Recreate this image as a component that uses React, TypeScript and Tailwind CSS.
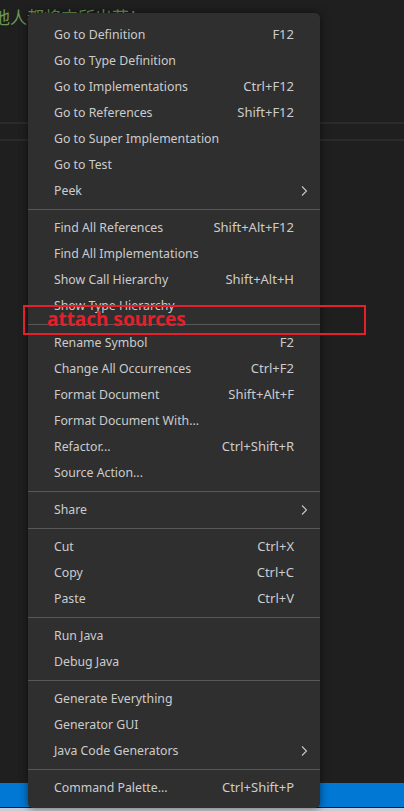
import React from 'react';

type Item = { label: string; keys?: string; sub?: boolean };

const GROUPS: Item[][] = [
  [
    { label: 'Go to Definition', keys: 'F12' },
    { label: 'Go to Type Definition' },
    { label: 'Go to Implementations', keys: 'Ctrl+F12' },
    { label: 'Go to References', keys: 'Shift+F12' },
    { label: 'Go to Super Implementation' },
    { label: 'Go to Test' },
    { label: 'Peek', sub: true },
  ],
  [
    { label: 'Find All References', keys: 'Shift+Alt+F12' },
    { label: 'Find All Implementations' },
    { label: 'Show Call Hierarchy', keys: 'Shift+Alt+H' },
    { label: 'Show Type Hierarchy' },
  ],
  [
    { label: 'Rename Symbol', keys: 'F2' },
    { label: 'Change All Occurrences', keys: 'Ctrl+F2' },
    { label: 'Format Document', keys: 'Shift+Alt+F' },
    { label: 'Format Document With...' },
    { label: 'Refactor...', keys: 'Ctrl+Shift+R' },
    { label: 'Source Action...' },
  ],
  [{ label: 'Share', sub: true }],
  [
    { label: 'Cut', keys: 'Ctrl+X' },
    { label: 'Copy', keys: 'Ctrl+C' },
    { label: 'Paste', keys: 'Ctrl+V' },
  ],
  [{ label: 'Run Java' }, { label: 'Debug Java' }],
  [
    { label: 'Generate Everything' },
    { label: 'Generator GUI' },
    { label: 'Java Code Generators', sub: true },
  ],
  [{ label: 'Command Palette...', keys: 'Ctrl+Shift+P' }],
];

function Chevron() {
  return (
    <svg width="8" height="12" viewBox="0 0 8 12" className="absolute right-[12px] top-[7px]">
      <path d="M2 1.5 L6.5 6 L2 10.5" fill="none" stroke="#c8c8c8" strokeWidth="1.1" />
    </svg>
  );
}

function MenuRow({ item }: { item: Item }) {
  return (
    <div className="relative flex items-center justify-between h-[26px] pl-[26px] pr-[26px]">
      <span className="text-[12.3px]">{item.label}</span>
      {item.keys && <span className="text-[13px]">{item.keys}</span>}
      {item.sub && <Chevron />}
    </div>
  );
}

export default function App() {
  return (
    <div
      className="relative w-[404px] h-[811px] overflow-hidden bg-[#1f1f1f] flex flex-col"
      style={{ fontFamily: '"Noto Sans", "Open Sans", sans-serif' }}
    >
      <div className="h-[122px] shrink-0">
        <div
          className="ml-[-7px] mt-[7px] text-[17px] leading-[20px] text-[#6a9955]"
          style={{ fontFamily: '"Noto Sans CJK SC", sans-serif' }}
        >
          他人都将支所出获！
        </div>
      </div>
      <div className="h-[2px] bg-[#2b2b2b] shrink-0" />
      <div className="h-[15px] shrink-0" />
      <div className="h-[2px] bg-[#2b2b2b] shrink-0" />
      <div className="flex-1" />
      <div className="h-[24px] bg-[#0078d4] shrink-0" />
      <div className="h-[1px] bg-[#181818] shrink-0" />
      <div className="h-[3px] bg-[#c9ced4] shrink-0" />

      {/* context menu */}
      <div className="absolute left-[28px] top-[13px] w-[292px] rounded-[5px] bg-[#2f2f2f] pt-[9px] pb-[7px] text-[#cccccc] shadow-[0_0_8px_rgba(0,0,0,0.55)]">
        {GROUPS.map((group, gi) => (
          <div key={gi}>
            {gi > 0 && <div className="my-[5px] h-px bg-[#585858]" />}
            {group.map((item) => (
              <MenuRow key={item.label} item={item} />
            ))}
          </div>
        ))}
      </div>

      {/* red annotation */}
      <div className="absolute left-[23px] top-[305px] w-[343px] h-[30px] border-2 border-[#e5202b]" />
      <div className="absolute left-[47px] top-[307px] text-[19px] leading-[24px] font-bold text-[#e5202b]">
        attach sources
      </div>
    </div>
  );
}
